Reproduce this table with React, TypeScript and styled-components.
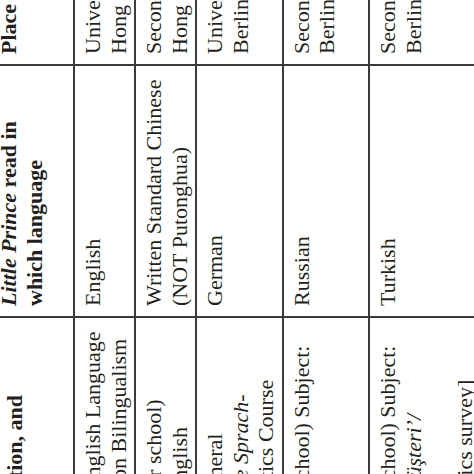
import styled, { createGlobalStyle } from 'styled-components';

const GlobalStyle = createGlobalStyle`
  html, body {
    margin: 0;
    padding: 0;
    background: #ffffff;
  }
  body {
    font-family: "Liberation Serif", "Times New Roman", serif;
  }
`;

const Frame = styled.div`
  width: 474px;
  height: 474px;
  overflow: hidden;
  background: #ffffff;
`;

// the table is printed sideways on the page, so it is laid out upright and turned
const Table = styled.table`
  border-collapse: collapse;
  table-layout: fixed;
  width: 624px;
  transform-origin: 0 0;
  transform: translate(-9px, 550px) rotate(-90deg);
  font-size: 22px;
  line-height: 25.5px;
  color: #231f20;
`;

const Head = styled.th<{ $drop?: number }>`
  padding: ${(p) => 5 + (p.$drop ?? 0)}px 10px 26px;
  text-align: left;
  vertical-align: top;
  font-weight: 700;
  white-space: nowrap;
  border: 2px solid #3b3b3b;
  border-top: 0;
`;

const Cell = styled.td`
  padding: 5px 10px 3px;
  text-align: left;
  vertical-align: top;
  white-space: nowrap;
  border: 2px solid #3b3b3b;
`;

const Em = styled.i`
  font-style: italic;
`;

type Row = {
  subject: React.ReactNode;
  language: React.ReactNode;
  place: React.ReactNode;
};

const rows: Row[] = [
  {
    subject: (
      <>
        MA: English Language
        <br />
        Focus on Bilingualism
      </>
    ),
    language: 'English',
    place: (
      <>
        University
        <br />
        Hong Kong
      </>
    ),
  },
  {
    subject: (
      <>
        (Higher school)
        <br />
        ESL English
      </>
    ),
    language: (
      <>
        Written Standard Chinese
        <br />
        (NOT Putonghua)
      </>
    ),
    place: (
      <>
        Secondary
        <br />
        Hong Kong
      </>
    ),
  },
  {
    subject: (
      <>
        BA General
        <br />
        <Em>Vorlage Sprach-</Em>
        <br />
        Semantics Course
      </>
    ),
    language: 'German',
    place: (
      <>
        University
        <br />
        Berlin
      </>
    ),
  },
  {
    subject: (
      <>
        (Sec. school) Subject:
        <br />
        Ethics
        <br />
        Class
      </>
    ),
    language: 'Russian',
    place: (
      <>
        Secondary
        <br />
        Berlin
      </>
    ),
  },
  {
    subject: (
      <>
        (Sec. school) Subject:
        <br />
        e.g. <Em>’müşteri’/</Em>
        <br />
        [in a
        <br />
        semantics survey]
      </>
    ),
    language: 'Turkish',
    place: (
      <>
        Secondary
        <br />
        Berlin
      </>
    ),
  },
];

export default function App() {
  return (
    <>
      <GlobalStyle />
      <Frame>
        <Table>
          <colgroup>
            <col style={{ width: 232 }} />
            <col style={{ width: 252 }} />
            <col style={{ width: 140 }} />
          </colgroup>
          <thead>
            <tr>
              <Head $drop={6}>Education, and</Head>
              <Head>
                <Em>Little Prince</Em> read in
                <br />
                which language
              </Head>
              <Head>Place</Head>
            </tr>
          </thead>
          <tbody>
            {rows.map((row, i) => (
              <tr key={i}>
                <Cell>{row.subject}</Cell>
                <Cell>{row.language}</Cell>
                <Cell>{row.place}</Cell>
              </tr>
            ))}
          </tbody>
        </Table>
      </Frame>
    </>
  );
}
